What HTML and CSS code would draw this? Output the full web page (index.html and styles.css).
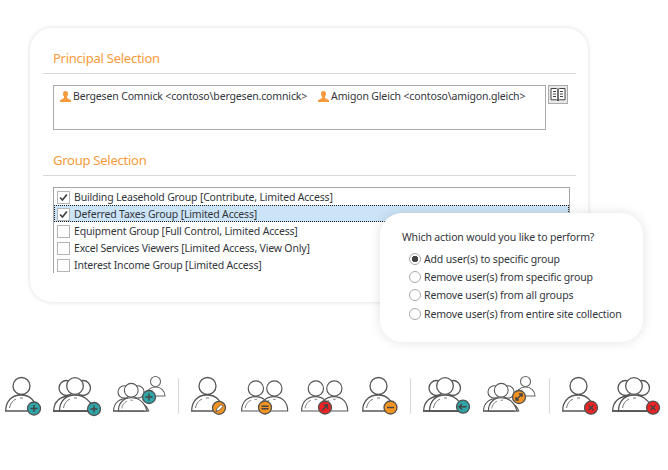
FILE: index.html
```html
<!DOCTYPE html>
<html lang="en">
<head>
<meta charset="utf-8">
<title>Principal Selection</title>
<link rel="stylesheet" href="styles.css">
</head>
<body>
<svg class="defs" aria-hidden="true">
  <defs>
    <g id="solo" class="ln">
      <circle cx="16.500" cy="-25" r="8.500"/>
      <path d="M.7 0C.7-10 7-16 16-16S31.300-10 31.300 0Z"/>
      <path class="hl" d="M4.500-3C5-7 7.500-10.500 11-12M15-13h3"/>
    </g>
    <g id="group" class="ln">
      <circle cx="13.500" cy="-23" r="7.500"/>
      <circle cx="30" cy="-23" r="7.500"/>
      <path d="M.7 0C.7-10 8-15 17-15S40-10 43 0Z"/>
      <circle cx="22" cy="-25" r="8.300"/>
      <path d="M6.500 0C6.500-10 13-16 22-16S38-10 41 0Z"/>
      <path class="hl" d="M10.500-3C11-7 13.500-10.500 17-12M21-13h3"/>
      <path d="M0 0H38"/>
    </g>
    <g id="small" class="ln sm">
      <circle cx="9.500" cy="-14.500" r="5"/>
      <path d="M0 0C0-5 4-9 9.500-9S19-5 19 0Z"/>
      <path class="hl" d="M3-2C3.500-4 5-5.500 6.500-6.200"/>
    </g>
  </defs>
</svg>
<main class="page">
  <section class="card">
    <h2 class="heading">Principal Selection</h2>
    <div class="principal">
      <div class="people">
        <span class="person"><svg class="user" viewBox="0 0 11 11"><path d="M5.500 0C7.300 0 8 1.300 8 2.800 8 4 7.500 5 7 5.700V7L11 9.300V11H0V9.300L4 7V5.700C3.500 5 3 4 3 2.800 3 1.300 3.700 0 5.500 0Z"/></svg>Bergesen Comnick &lt;contoso\bergesen.comnick&gt;</span>
        <span class="person"><svg class="user" viewBox="0 0 11 11"><path d="M5.500 0C7.300 0 8 1.300 8 2.800 8 4 7.500 5 7 5.700V7L11 9.300V11H0V9.300L4 7V5.700C3.500 5 3 4 3 2.800 3 1.300 3.700 0 5.500 0Z"/></svg>Amigon Gleich &lt;contoso\amigon.gleich&gt;</span>
      </div>
      <button class="book" aria-label="Address book"><svg viewBox="0 0 16 15" width="16" height="15"><path d="M1 1.500H6.500C7.300 1.500 8 2 8 3V14C8 13 7.300 12.800 6.500 12.800H1ZM15 1.500H9.500C8.700 1.500 8 2 8 3V14C8 13 8.700 12.800 9.500 12.800H15ZM3 4.500H6M3 7H6M3 9.500H6M10 4.500H13M10 7H13M10 9.500H13"/></svg></button>
    </div>
    <h2 class="heading second">Group Selection</h2>
    <ul class="groups">
      <li class="row"><span class="box"><svg viewBox="0 0 13 13"><path d="M2.500 6.500L5.300 9.500 10.500 3"/></svg></span>Building Leasehold Group [Contribute, Limited Access]</li>
      <li class="row active"><span class="box"><svg viewBox="0 0 13 13"><path d="M2.500 6.500L5.300 9.500 10.500 3"/></svg></span>Deferred Taxes Group [Limited Access]</li>
      <li class="row"><span class="box"></span>Equipment Group [Full Control, Limited Access]</li>
      <li class="row"><span class="box"></span>Excel Services Viewers [Limited Access, View Only]</li>
      <li class="row"><span class="box"></span>Interest Income Group [Limited Access]</li>
    </ul>
  </section>

  <aside class="popup">
    <p class="question">Which action would you like to perform?</p>
    <ul class="options">
      <li class="option"><span class="radio on"></span>Add user(s) to specific group</li>
      <li class="option"><span class="radio"></span>Remove user(s) from specific group</li>
      <li class="option"><span class="radio"></span>Remove user(s) from all groups</li>
      <li class="option"><span class="radio"></span>Remove user(s) from entire site collection</li>
    </ul>
  </aside>

  <nav class="tools">
    <svg class="i36" viewBox="0 0 36 40"><use href="#solo" x="0" y="36"/><circle class="teal" cx="29" cy="33.500" r="6.500"/><path class="mk" d="M25.500 33.500h7M29 30v7"/></svg>
    <svg class="i48" viewBox="0 0 48 40"><use href="#group" x="0" y="36"/><circle class="teal" cx="41" cy="34" r="6.500"/><path class="mk" d="M37.500 34h7M41 30.500v7"/></svg>
    <svg class="i53" viewBox="0 0 53 40"><use href="#small" x="33" y="21"/><use href="#group" transform="translate(0 36) scale(.83)"/><circle class="teal" cx="36" cy="22" r="6.500"/><path class="mk" d="M32.500 22h7M36 18.500v7"/></svg>
    <span class="sep"></span>
    <svg class="i38" viewBox="0 0 38 40"><use href="#solo" x="0" y="36"/><circle class="amber" cx="28" cy="32.800" r="6.500"/><path class="pen" d="M25 36.500l1-3 4-4 2 2-4 4Z"/></svg>
    <svg class="i48" viewBox="0 0 48 40"><use href="#solo" transform="translate(0 36) scale(.9)"/><use href="#solo" transform="translate(18.500 36) scale(.9)"/><circle class="amber" cx="24" cy="32.500" r="6.500"/><path class="mk" d="M20.500 31.300h7M20.500 33.800h7"/></svg>
    <svg class="i49" viewBox="0 0 49 40"><use href="#solo" transform="translate(0 36) scale(.9)"/><use href="#solo" transform="translate(18.500 36) scale(.9)"/><circle class="red" cx="24" cy="32.500" r="6.500"/><path class="mk" d="M21 35.500l5.500-5.500M22.500 30h4v4"/></svg>
    <svg class="i36" viewBox="0 0 36 40"><use href="#solo" x="0" y="36"/><circle class="amber" cx="28.500" cy="32.500" r="6.500"/><path class="mk" d="M25 32.500h7"/></svg>
    <span class="sep"></span>
    <svg class="i48" viewBox="0 0 48 40"><use href="#group" x="0" y="36"/><circle class="teal" cx="40" cy="31.700" r="6.500"/><path class="mk" d="M43.500 31.700h-7M39 29l-3 2.700 3 2.700"/></svg>
    <svg class="i54" viewBox="0 0 54 40"><use href="#small" x="33" y="21"/><use href="#group" transform="translate(0 36) scale(.83)"/><circle class="amber" cx="36" cy="22" r="6.500"/><path class="mk" d="M33 25l6-6M33 22v3h3M36 19h3v3"/></svg>
    <span class="sep"></span>
    <svg class="i38" viewBox="0 0 38 40"><use href="#solo" x="0" y="36"/><circle class="red" cx="29" cy="32.700" r="6.500"/><path class="mk" d="M26.500 30.200l5 5M31.500 30.200l-5 5"/></svg>
    <svg class="i48" viewBox="0 0 48 40"><use href="#group" x="0" y="36"/><circle class="red" cx="41" cy="32.700" r="6.500"/><path class="mk" d="M38.500 30.200l5 5M43.500 30.200l-5 5"/></svg>
  </nav>
</main>
</body>
</html>
```
FILE: styles.css
```css
* { box-sizing: border-box; }
html, body { margin: 0; padding: 0; background: #fff; }
body {
  width: 668px;
  height: 470px;
  overflow: hidden;
  font-family: "Noto Sans", "Open Sans", sans-serif;
  font-size: 10.5px;
  letter-spacing: -.15px;
  color: #33363b;
}
ul { list-style: none; margin: 0; padding: 0; }
.defs { display: block; width: 0; height: 0; }
.page { position: relative; padding: 28px 0 0 30px; }

.card {
  width: 558px;
  height: 274px;
  padding: 0 12px 0 13px;
  background: #fff;
  border-radius: 22px;
  box-shadow: 0 0 5px rgba(0, 0, 0, .14);
}
.heading {
  margin: 0;
  height: 46px;
  padding: 19px 0 0 10px;
  font-size: 13px;
  letter-spacing: -.25px;
  line-height: 22px;
  font-weight: 400;
  color: #f89a3a;
  border-bottom: 1px solid #d9d9d9;
  white-space: nowrap;
}
.second { height: 46px; padding-top: 19px; }

.principal { display: flex; gap: 2px; margin: 11px 0 0 10px; height: 45px; }
.people {
  display: flex;
  gap: 11px;
  width: 493px;
  padding: 3px 6px;
  border: 1px solid #aaa;
  line-height: 14px;
  white-space: nowrap;
}
.person { display: flex; align-items: center; height: 14px; }
.user { width: 11px; height: 11px; margin-right: 2px; fill: #f79a3e; flex: none; }
.book {
  display: flex;
  align-items: center;
  justify-content: center;
  width: 20px;
  height: 19px;
  padding: 0;
  background: #e9e9e9;
  border: 1px solid #aaa;
}
.book path { fill: #fff; stroke: #444; stroke-width: 1; }

.groups {
  margin: 11px 6px 0 10px;
  height: 86px;
  border: 1px solid #a5a5a5;
  border-bottom: 0;
}
.row {
  display: flex;
  align-items: center;
  height: 17px;
  padding-top: 1px;
  padding-left: 3px;
  line-height: 17px;
  letter-spacing: -.18px;
  white-space: nowrap;
}
.active {
  background: #cce4f7;
  outline: 1px dotted #222;
  outline-offset: -1px;
}
.box {
  flex: none;
  width: 13px;
  height: 13px;
  margin-right: 4px;
  background: #fff;
  border: 1px solid #b5b5b5;
}
.box svg { display: block; width: 11px; height: 11px; fill: none; stroke: #444; stroke-width: 2; }

.popup {
  position: absolute;
  left: 380px;
  top: 213px;
  width: 263px;
  height: 129px;
  padding: 17px 0 0 22px;
  background: #fff;
  border-radius: 22px;
  box-shadow: 0 0 12px rgba(0, 0, 0, .12);
}
.question { margin: 0 0 5px; line-height: 15px; white-space: nowrap; }
.options { padding-left: 7px; }
.option { display: flex; align-items: center; height: 18.200px; white-space: nowrap; }
.radio {
  flex: none;
  width: 12px;
  height: 12px;
  margin-right: 3px;
  border: 1px solid #aaa;
  border-radius: 50%;
  background: #fff;
}
.radio.on { background: radial-gradient(circle, #444 0 3px, #fff 3.500px); }

.tools {
  display: flex;
  gap: 12px;
  position: relative;
  width: 668px;
  height: 40px;
  margin: 73px 0 0 -25px;
}
.tools svg { display: block; flex: none; height: 40px; overflow: visible; }
.i36 { width: 36px; }
.i38 { width: 38px; }
.i48 { width: 48px; }
.i49 { width: 49px; }
.i53 { width: 53px; }
.i54 { width: 54px; }
.sep { flex: none; width: 1px; height: 36px; margin-top: 3px; background: #d8d8d8; }

.ln circle, .ln path { fill: #fff; stroke: #555; stroke-width: 1.300; }
.ln .hl { fill: none; stroke-width: .8; }
.sm circle, .sm path { stroke: #666; stroke-width: 1.100; }
.teal, .amber, .red { stroke: #505050; stroke-width: 1.300; }
.teal { fill: #2fa5a8; }
.amber { fill: #f39322; }
.red { fill: #ee2424; }
.mk { fill: none; stroke: #444; stroke-width: 1.400; }
.pen { fill: #fff; stroke: #444; stroke-width: .8; }
```
